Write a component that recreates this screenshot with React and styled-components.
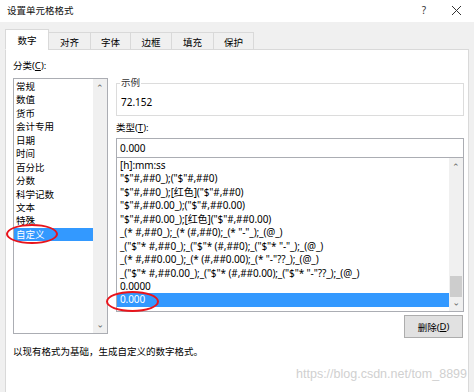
import React from "react";
import styled, { createGlobalStyle } from "styled-components";

const Global = createGlobalStyle`
  html, body { margin: 0; padding: 0; background: #fff; }
  body {
    font-family: "Noto Sans", "Noto Sans CJK SC", sans-serif;
    font-size: 10px;
    color: #000;
  }
`;

const categories = ["常规", "数值", "货币", "会计专用", "日期", "时间", "百分比", "分数", "科学记数", "文本", "特殊", "自定义"];

const formats = [
  "[h]:mm:ss",
  '"$"#,##0_);("$"#,##0)',
  '"$"#,##0_);[红色]("$"#,##0)',
  '"$"#,##0.00_);("$"#,##0.00)',
  '"$"#,##0.00_);[红色]("$"#,##0.00)',
  '_(* #,##0_);_(* (#,##0);_(* "-"_);_(@_)',
  '_("$"* #,##0_);_("$"* (#,##0);_("$"* "-"_);_(@_)',
  '_(* #,##0.00_);_(* (#,##0.00);_(* "-"??_);_(@_)',
  '_("$"* #,##0.00_);_("$"* (#,##0.00);_("$"* "-"??_);_(@_)',
  "0.0000",
  "0.000",
];

const tabs = [
  { label: "数字", w: 44 },
  { label: "对齐", w: 43 },
  { label: "字体", w: 41 },
  { label: "边框", w: 42 },
  { label: "填充", w: 43 },
  { label: "保护", w: 41 },
];

const App = () => {
  return (
    <>
      <Global />
      <Dialog>
        <TitleBar>
          <Title>设置单元格格式</Title>
          <TitleButtons>
            <Help>?</Help>
            <svg width="11" height="11" viewBox="0 0 11 11">
              <path d="M1 1 L10 10 M10 1 L1 10" stroke="#333" strokeWidth="1" />
            </svg>
          </TitleButtons>
        </TitleBar>
        <Body>
          <TabRow>
            {tabs.map((t, i) => (
              <Tab key={t.label} $active={i === 0} $w={t.w}>
                {t.label}
              </Tab>
            ))}
          </TabRow>
          <Panel>
            <Columns>
              <LeftCol>
                <Label>
                  分类(<u>C</u>):
                </Label>
                <ListBox $h={256}>
                  <Items>
                    {categories.map((c) => (
                      <Item key={c} $sel={c === "自定义"}>
                        {c}
                      </Item>
                    ))}
                  </Items>
                  <ScrollBar>
                    <Arrow>⌃</Arrow>
                    <Track />
                    <Arrow $down>⌃</Arrow>
                  </ScrollBar>
                </ListBox>
              </LeftCol>
              <RightCol>
                <Sample>
                  <legend>示例</legend>
                  <SampleValue>72.152</SampleValue>
                </Sample>
                <TypeLabel>
                  类型(<u>T</u>):
                </TypeLabel>
                <TypeInput>0.000</TypeInput>
                <ListBox $h={154} $noTop>
                  <Items>
                    {formats.map((f, i) => (
                      <FormatItem key={i} $sel={i === formats.length - 1}>
                        {f}
                      </FormatItem>
                    ))}
                  </Items>
                  <ScrollBar>
                    <Arrow>⌃</Arrow>
                    <Track>
                      <Thumb />
                    </Track>
                    <Arrow $down>⌃</Arrow>
                  </ScrollBar>
                </ListBox>
                <ButtonRow>
                  <Button>
                    删除(<u>D</u>)
                  </Button>
                </ButtonRow>
              </RightCol>
            </Columns>
            <Hint>以现有格式为基础，生成自定义的数字格式。</Hint>
            <Watermark>https://blog.csdn.net/tom_8899</Watermark>
          </Panel>
        </Body>
        <Circle style={{ left: 6, top: 224, width: 52, height: 20 }} />
        <Circle style={{ left: 106, top: 291, width: 53, height: 21 }} />
      </Dialog>
    </>
  );
};

const Dialog = styled.div`
  position: relative;
  width: 474px;
  height: 392px;
  overflow: hidden;
  display: flex;
  flex-direction: column;
  background: #fff;
`;

const TitleBar = styled.div`
  height: 22px;
  display: flex;
  align-items: center;
  justify-content: space-between;
  padding: 0 12px 2px 7px;
  box-sizing: border-box;
`;

const Title = styled.div`
  font-size: 9.5px;
  color: #111;
`;

const TitleButtons = styled.div`
  display: flex;
  align-items: center;
  gap: 25px;
`;

const Help = styled.span`
  font-size: 10px;
  color: #333;
`;

const Body = styled.div`
  flex: 1;
  background: #f0f0f0;
  padding: 7px 5px 0 5px;
  display: flex;
  flex-direction: column;
`;

const TabRow = styled.div`
  display: flex;
  align-items: flex-end;
  height: 21px;
  position: relative;
  z-index: 1;
  margin-bottom: -1px;
`;

const Tab = styled.div`
  width: ${(p) => p.$w}px;
  height: ${(p) => (p.$active ? 21 : 18)}px;
  box-sizing: border-box;
  display: flex;
  align-items: center;
  justify-content: center;
  font-size: 9.5px;
  background: ${(p) => (p.$active ? "#fff" : "#f0f0f0")};
  border: 1px solid #d9d9d9;
  border-bottom: ${(p) => (p.$active ? "1px solid #fff" : "1px solid #d9d9d9")};
  margin-left: -1px;
  padding-top: ${(p) => (p.$active ? 0 : 1)}px;
  &:first-child {
    margin-left: 0;
  }
`;

const Panel = styled.div`
  flex: 1;
  background: #fff;
  border: 1px solid #d9d9d9;
  border-bottom: none;
  padding: 9px 4px 0 7px;
  display: flex;
  flex-direction: column;
`;

const Columns = styled.div`
  display: flex;
  gap: 8px;
`;

const LeftCol = styled.div`
  width: 95px;
  display: flex;
  flex-direction: column;
`;

const RightCol = styled.div`
  width: 348px;
  display: flex;
  flex-direction: column;
  padding-top: 17px;
`;

const Label = styled.div`
  font-size: 9.5px;
  height: 19px;
  line-height: 14px;
`;

const ListBox = styled.div`
  height: ${(p) => p.$h}px;
  box-sizing: border-box;
  border: 1px solid #abadb3;
  border-top: ${(p) => (p.$noTop ? "none" : "1px solid #abadb3")};
  display: flex;
  overflow: hidden;
`;

const Items = styled.div`
  flex: 1;
  min-width: 0;
  padding-top: 1px;
  overflow: hidden;
`;

const Item = styled.div`
  height: 13.45px;
  line-height: 13.45px;
  padding-left: 2px;
  font-size: 9.5px;
  white-space: nowrap;
  background: ${(p) => (p.$sel ? "#3399ff" : "transparent")};
  color: ${(p) => (p.$sel ? "#fff" : "#000")};
`;

const FormatItem = styled(Item)`
  font-size: 10px;
  padding-left: 3px;
  letter-spacing: -0.1px;
  overflow: hidden;
`;

const ScrollBar = styled.div`
  width: 14px;
  background: #f0f0f0;
  display: flex;
  flex-direction: column;
`;

const Arrow = styled.div`
  height: 14px;
  display: flex;
  align-items: center;
  justify-content: center;
  font-size: 9px;
  color: #606060;
  line-height: 1;
  padding-top: 3px;
  box-sizing: border-box;
  transform: ${(p) => (p.$down ? "rotate(180deg)" : "none")};
`;

const Track = styled.div`
  flex: 1;
  display: flex;
  flex-direction: column;
  justify-content: flex-end;
  padding: 0 1px;
`;

const Thumb = styled.div`
  height: 21px;
  background: #cdcdcd;
`;

const Sample = styled.fieldset`
  margin: 0;
  height: 40px;
  box-sizing: border-box;
  border: 1px solid #dcdcdc;
  padding: 0 4px;
  min-width: 0;
  legend {
    font-size: 9.5px;
    padding: 0 1px;
    margin-left: -1px;
    color: #333;
    line-height: 14px;
  }
`;

const SampleValue = styled.div`
  font-size: 10px;
  padding-top: 5px;
`;

const TypeLabel = styled.div`
  font-size: 9.5px;
  height: 22px;
  line-height: 24px;
`;

const TypeInput = styled.div`
  height: 20px;
  box-sizing: border-box;
  border: 1px solid #abadb3;
  font-size: 10px;
  line-height: 18px;
  padding-left: 3px;
`;

const ButtonRow = styled.div`
  display: flex;
  justify-content: flex-end;
  padding-top: 3px;
  padding-right: 1px;
`;

const Button = styled.div`
  width: 59px;
  height: 23px;
  box-sizing: border-box;
  background: #e1e1e1;
  border: 1px solid #adadad;
  display: flex;
  align-items: center;
  justify-content: center;
  font-size: 9.5px;
`;

const Hint = styled.div`
  font-size: 9.5px;
  padding-top: 6px;
`;

const Watermark = styled.div`
  align-self: flex-end;
  font-size: 12.5px;
  color: #d0d0d0;
  margin-top: 9px;
  margin-right: -3px;
  font-family: "Liberation Sans", sans-serif;
`;

const Circle = styled.div`
  position: absolute;
  border: 2.5px solid #e8141c;
  border-radius: 50%;
  box-sizing: border-box;
  pointer-events: none;
`;

export default App;
